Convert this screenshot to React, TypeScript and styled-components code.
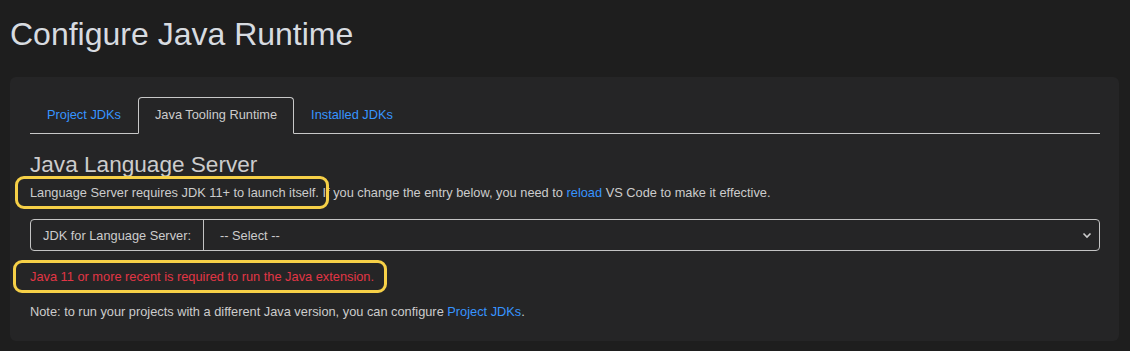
import React from "react";
import styled, { createGlobalStyle } from "styled-components";

const Global = createGlobalStyle`
  html, body { margin: 0; padding: 0; background: #1e1e1e; }
  body { font-family: "Liberation Sans", Arial, sans-serif; color: #cccccc; }
  * { box-sizing: border-box; }
`;

const Page = styled.div`
  padding: 0 11px 0 10px;
  height: 351px;
  overflow: hidden;
`;

const Title = styled.h1`
  margin: 15px 0 24px;
  font-size: 32px;
  line-height: 38px;
  font-weight: 400;
  color: #d7dbe0;
`;

const Card = styled.section`
  background: #252526;
  border-radius: 6px;
  padding: 20px 19px 20px 20px;
`;

const TabList = styled.div`
  display: flex;
  border-bottom: 1px solid #c8c8c8;
`;

const Tab = styled.div<{ $active?: boolean }>`
  font-size: 12.8px;
  line-height: 18px;
  padding: 8px 16px 9px;
  margin-bottom: -1px;
  border: 1px solid ${(p) => (p.$active ? "#c8c8c8" : "transparent")};
  border-bottom-color: ${(p) => (p.$active ? "#252526" : "transparent")};
  border-radius: 4px 4px 0 0;
  color: ${(p) => (p.$active ? "#cccccc" : "#3794ff")};
  background: ${(p) => (p.$active ? "#252526" : "transparent")};
  cursor: pointer;
`;

const Heading = styled.h2`
  margin: 17px 0 0;
  font-size: 22.6px;
  line-height: 27px;
  font-weight: 400;
  color: #cccccc;
`;

const Para = styled.p<{ $top: number; $error?: boolean }>`
  margin: ${(p) => p.$top}px 0 0;
  font-size: 12.8px;
  line-height: 18px;
  color: ${(p) => (p.$error ? "#e23545" : "#cccccc")};
`;

const Highlight = styled.span<{ $l: number; $r: number }>`
  position: relative;
  &::after {
    content: "";
    position: absolute;
    left: ${(p) => -p.$l}px;
    right: ${(p) => -p.$r}px;
    top: -9px;
    bottom: -9px;
    border: 3px solid #f6d047;
    border-radius: 9px;
    pointer-events: none;
    z-index: 2;
  }
`;

const Link = styled.a`
  color: #3794ff;
  text-decoration: none;
`;

const InputGroup = styled.div`
  margin-top: 17px;
  display: flex;
  height: 32px;
  border: 1px solid #c4c4c4;
  border-radius: 4px;
`;

const GroupLabel = styled.div`
  display: flex;
  align-items: center;
  padding: 0 12px;
  font-size: 12.8px;
  border-right: 1px solid #c4c4c4;
  color: #cccccc;
  white-space: nowrap;
`;

const SelectBox = styled.div`
  flex: 1;
  display: flex;
  align-items: center;
  justify-content: space-between;
  padding: 0 6px 0 16px;
  font-size: 12.8px;
  color: #cccccc;
`;

export default function App() {
  return (
    <>
      <Global />
      <Page>
        <Title>Configure Java Runtime</Title>
        <Card>
          <TabList>
            <Tab>Project JDKs</Tab>
            <Tab $active>Java Tooling Runtime</Tab>
            <Tab>Installed JDKs</Tab>
          </TabList>
          <Heading>Java Language Server</Heading>
          <Para $top={6}>
            <Highlight $l={15} $r={10}>
              Language Server requires JDK 11+ to launch itself.
            </Highlight>{" "}
            If you change the entry below, you need to <Link>reload</Link> VS
            Code to make it effective.
          </Para>
          <InputGroup>
            <GroupLabel>JDK for Language Server:</GroupLabel>
            <SelectBox>
              <span>-- Select --</span>
              <svg width="12" height="12" viewBox="0 0 12 12">
                <path
                  d="M2.5 4.5 L6 8 L9.5 4.5"
                  fill="none"
                  stroke="#cccccc"
                  strokeWidth="1.6"
                />
              </svg>
            </SelectBox>
          </InputGroup>
          <Para $top={17} $error>
            <Highlight $l={17} $r={13}>
              Java 11 or more recent is required to run the Java extension.
            </Highlight>
          </Para>
          <Para $top={17}>
            Note: to run your projects with a different Java version, you can
            configure <Link>Project JDKs</Link>.
          </Para>
        </Card>
      </Page>
    </>
  );
}
